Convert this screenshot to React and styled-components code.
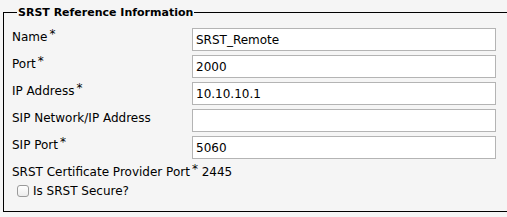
import React from "react";
import styled, { createGlobalStyle } from "styled-components";

const GlobalStyle = createGlobalStyle`
  html, body {
    margin: 0;
    padding: 0;
    background: #f5f5f5;
    overflow: hidden;
  }
  body {
    font-family: Verdana, "DejaVu Sans", sans-serif;
    font-size: 12px;
    color: #000;
  }
`;

const fields = [
  { label: "Name", required: true, value: "SRST_Remote" },
  { label: "Port", required: true, value: "2000" },
  { label: "IP Address", required: true, value: "10.10.10.1" },
  { label: "SIP Network/IP Address", required: false, value: "" },
  { label: "SIP Port", required: true, value: "5060" },
];

const App = () => {
  return (
    <>
      <GlobalStyle />
      <Frame>
        <Fieldset>
          <Legend>SRST Reference Information</Legend>
          <Grid>
            {fields.map((f) => (
              <React.Fragment key={f.label}>
                <Label>
                  {f.label}
                  {f.required && <Star>*</Star>}
                </Label>
                <Input type="text" defaultValue={f.value} />
              </React.Fragment>
            ))}
          </Grid>
          <InfoRow>
            SRST Certificate Provider Port<Star>*</Star> 2445
          </InfoRow>
          <CheckRow>
            <Check type="checkbox" />
            Is SRST Secure?
          </CheckRow>
        </Fieldset>
      </Frame>
    </>
  );
};

export default App;

const Frame = styled.div`
  width: 507px;
  height: 217px;
  overflow: hidden;
`;

const Fieldset = styled.fieldset`
  margin: 6px 0 0 3px;
  width: 540px;
  border: 1px solid #000;
  padding: 9px 0 13px 8px;
  box-sizing: border-box;
`;

const Legend = styled.legend`
  font-weight: bold;
  font-size: 11px;
  padding: 0 1px;
  margin-left: 5px;
`;

const Grid = styled.div`
  display: grid;
  grid-template-columns: 180px 304px;
  row-gap: 4px;
`;

const Label = styled.div`
  height: 23px;
  padding-top: 2px;
  box-sizing: border-box;
`;

const Star = styled.sup`
  font-size: 12px;
  line-height: 0;
  vertical-align: 3px;
  margin-left: 2px;
`;

const Input = styled.input`
  height: 23px;
  width: 304px;
  box-sizing: border-box;
  border: 1px solid #b4b4b4;
  background: #fff;
  font-family: Verdana, "DejaVu Sans", sans-serif;
  font-size: 12px;
  padding: 1px 3px 0;
  margin: 0;
  color: #000;
  outline: none;
`;

const InfoRow = styled.div`
  margin-top: 6px;
  height: 18px;
  line-height: 14px;
`;

const CheckRow = styled.div`
  display: flex;
  align-items: center;
  gap: 4px;
  margin-top: 1px;
  padding-left: 5px;
`;

const Check = styled.input`
  width: 12px;
  height: 12px;
  margin: 0;
  appearance: none;
  border: 1px solid #9a9a9a;
  border-radius: 3px;
  background: linear-gradient(#fff, #ececec);
`;
